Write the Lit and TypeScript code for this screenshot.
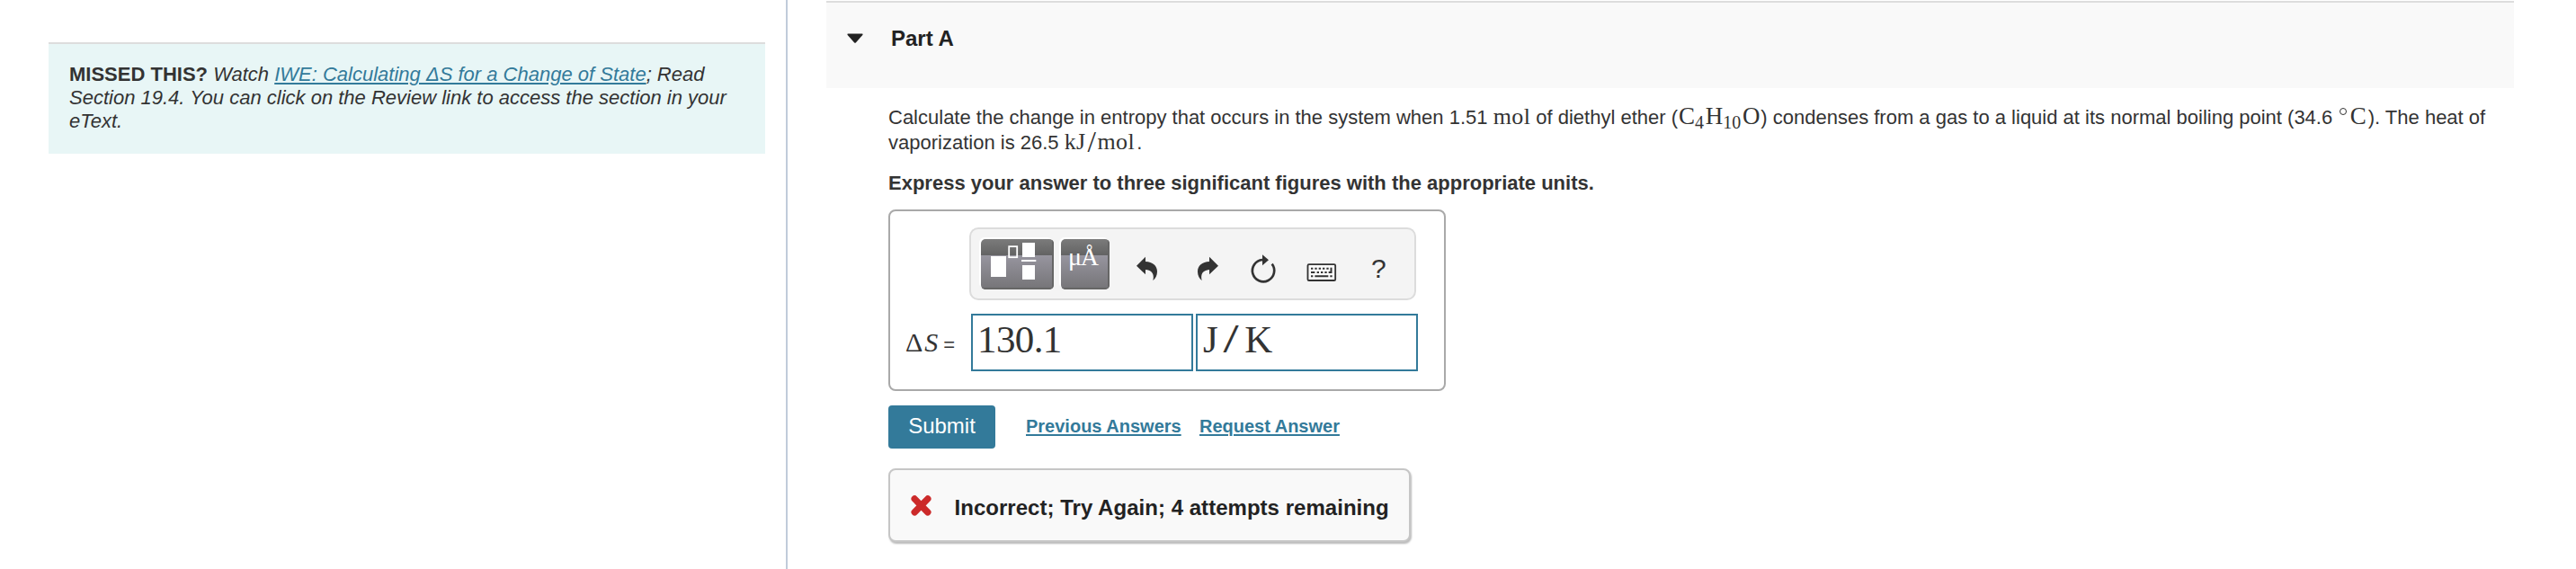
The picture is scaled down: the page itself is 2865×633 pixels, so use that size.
import { LitElement, html, css } from "lit";
import { customElement } from "lit/decorators.js";

@customElement("app-root")
export class AppRoot extends LitElement {
  static styles = css`
    :host { display: block; width: 2865px; height: 633px; overflow: hidden; background: #fff; color: #333;
      font: 22px/28px "Liberation Sans", Arial, sans-serif; }
    * { box-sizing: border-box; }
    a { color: #337a9a; text-decoration: underline; text-decoration-thickness: 2px; }
    svg { display: block; flex: none; }
    .page { display: flex; height: 633px; }
    .left { width: 874px; padding: 47px 23px 0 54px; flex: none; }
    .hint { height: 124px; background: #e8f6f6; border-top: 2px solid #ddd; padding: 21px 23px 0; line-height: 26px; font-style: italic; white-space: nowrap; }
    .hint b { font-style: normal; }
    .hint a { text-underline-offset: 2px; }
    .right { width: 1991px; border-left: 2px solid #c0cbda; padding: 1px 69px 0 43px; }
    .head { height: 97px; border-top: 2px solid #ddd; background: #f9f9f9; display: flex; padding: 26px 0 0 23px; font: bold 24px/27px "Liberation Sans", Arial, sans-serif; color: #222; }
    .caret { width: 49px; height: 27px; }
    .body { padding: 18.5px 0 0 69px; }
    .q { height: 56px; white-space: nowrap; }
    .m { font-family: "Liberation Serif", serif; font-size: 26px; line-height: 20px; display: inline-block; letter-spacing: 0.4px; }
    .mol { width: 41.5px; }
    .formula { width: 92.3px; font-size: 27px; padding-left: 1px; letter-spacing: 0; }
    .formula sub { font-size: 20px; line-height: 0; vertical-align: -5px; margin-right: 1.7px; }
    .deg { width: 33.4px; font-size: 27px; }
    .ring { display: inline-block; width: 8px; height: 8px; border: 1px solid #333; border-radius: 50%; margin: 0 4px 0 1.5px; vertical-align: 10px; }
    .rate { width: 80.5px; }
    .slash { font-size: 34px; line-height: 0; margin: 0 1px 0 2px; vertical-align: -3px; }
    .ask { display: block; margin-top: 17px; height: 28px; }
    .box { width: 620px; height: 202px; border: 2px solid #a9a9a9; border-radius: 8px; margin-top: 15.5px; padding-top: 18px; }
    .tools { margin-left: 88px; width: 497px; height: 81px; border: 2px solid #dcdcdc; border-radius: 10px; background: #f4f4f4; display: flex; padding: 8px 0 0 8px; }
    .icon { height: 40px; margin-top: 17px; }
    .units { margin-left: 3px; }
    .undo { margin-left: 24px; }
    .entry { display: flex; margin-top: 15px; }
    .label { width: 90px; padding: 16.5px 0 0 17px; white-space: nowrap; line-height: 30px; }
    .label i, .label span { font-family: "Liberation Serif", serif; font-size: 30px; }
    .label i { margin: 0 6px 0 2px; }
    .field { width: 247px; height: 64px; border: 2px solid #337a9a; margin-right: 3px; padding: 3px 0 0 5px; font: 43px/48px "Liberation Serif", serif; letter-spacing: -0.6px; white-space: pre; }
    .unit { padding-left: 6px; letter-spacing: 0; }
    .per { font-family: "Liberation Sans", sans-serif; font-style: italic; font-size: 41px; margin: 0 10px 0 8px; }
    .actions { display: flex; margin-top: 16px; }
    .submit { width: 119px; height: 48px; border: 0; border-radius: 4px; background: #337a9a; color: #fff; font: 24px/27px "Liberation Sans", Arial, sans-serif; padding: 9px 0 12px; margin-right: 34px; }
    .actions a { font-weight: bold; font-size: 20px; line-height: 22px; margin: 12px 20.3px 0 0; text-underline-offset: 2px; white-space: nowrap; }
    .alert { width: 581px; height: 82px; border: 2px solid #c6c6c6; border-radius: 8px; background: #f9f9f9; box-shadow: 1px 2px 2px #bbb; margin-top: 22px; display: flex; color: #222; font: bold 24px/27px "Liberation Sans", Arial, sans-serif; letter-spacing: 0.03px; padding: 28px 0 0 22px; white-space: nowrap; }
    .x { margin-right: 24.5px; }
  `;
  render() {
    const arrow = "M12 77 L42 47 V63 C66 64 81 76 81 97 C81 110 75 120 67 126 C72 105 64 92 42 90 V106 Z";
    return html`<div class="page">
      <div class="left"><div class="hint"><b>MISSED THIS?</b> Watch <a>IWE: Calculating ΔS for a Change of State</a>; Read<br>Section 19.4. You can click on the Review link to access the section in your<br>eText.</div></div>
      <div class="right">
        <div class="head"><svg class="caret" viewBox="0 0 49 27"><path d="M.8 8.5H17.2Q18 9 17.3 10L10 18.3Q9 19.3 8 18.3L.7 10Q0 9 .8 8.5Z" fill="#222"/></svg><span>Part A</span></div>
        <div class="body">
          <div class="q">Calculate the change in entropy that occurs in the system when 1.51 <span class="m mol">mol</span> of diethyl ether (<span class="m formula">C<sub>4</sub>H<sub>10</sub>O</span>) condenses from a gas to a liquid at its normal boiling point (34.6 <span class="m deg"><span class="ring"></span>C</span>). The heat of<br>vaporization is 26.5 <span class="m rate">kJ<span class="slash">/</span>mol</span>.</div>
          <b class="ask">Express your answer to three significant figures with the appropriate units.</b>
          <div class="box">
            <div class="tools">
              <svg width="86" height="62" viewBox="-3 -3 86 62">
                <defs>
                  <linearGradient id="hi" x2="0" y2="1"><stop stop-color="#7b7b7b"/><stop offset="1" stop-color="#636363"/></linearGradient>
                  <linearGradient id="lo" x2="0" y2="1"><stop stop-color="#97959f"/><stop offset="1" stop-color="#757477"/></linearGradient>
                  <clipPath id="c1"><rect width="81" height="56" rx="5"/></clipPath>
                </defs>
                <rect x="-2" y="-2" width="82" height="57" rx="6" fill="#fff"/>
                <g clip-path="url(#c1)"><rect width="81" height="18" fill="url(#hi)"/><rect y="18" width="81" height="38" fill="url(#lo)"/><path d="M80 0V55H0" fill="none" stroke="#666" stroke-width="2"/></g>
                <g fill="#fff"><rect x="11" y="19" width="17" height="23"/><rect x="46" y="4" width="14" height="16"/><rect x="45" y="23" width="16.3" height="2"/><rect x="46" y="29" width="14" height="16"/></g>
                <rect x="31.2" y="8.2" width="9" height="12" fill="none" stroke="#fff" stroke-width="1.8"/>
              </svg>
              <svg class="units" width="59" height="62" viewBox="-3 -3 59 62">
                <defs>
                  <linearGradient id="hi2" x2="0" y2="1"><stop stop-color="#7b7b7b"/><stop offset="1" stop-color="#636363"/></linearGradient>
                  <linearGradient id="lo2" x2="0" y2="1"><stop stop-color="#97959f"/><stop offset="1" stop-color="#757477"/></linearGradient>
                  <clipPath id="c2"><rect width="54" height="56" rx="5"/></clipPath>
                </defs>
                <rect x="-2" y="-2" width="55" height="57" rx="6" fill="#fff"/>
                <g clip-path="url(#c2)"><rect width="54" height="18" fill="url(#hi2)"/><rect y="18" width="54" height="38" fill="url(#lo2)"/><path d="M53 0V55H0" fill="none" stroke="#666" stroke-width="2"/></g>
                <text x="8" y="29" font-family="Liberation Serif" font-size="28" textLength="34" fill="#fff">μÅ</text>
              </svg>
              <svg class="icon undo" width="50" viewBox="0 30 150 120"><path d=${arrow} fill="#333"/></svg>
              <svg class="icon" width="63.33" viewBox="150 30 190 120"><path transform="translate(297 0) scale(-1 1)" d=${arrow} fill="#333"/></svg>
              <svg class="icon" width="63.33" viewBox="340 30 190 120"><path d="M465 71A36.5 36.5 0 1 1 433 57" fill="none" stroke="#333" stroke-width="8"/><path d="M433 40L454 58L433 76Z" fill="#333"/></svg>
              <svg class="icon" width="70" viewBox="530 30 210 120"><rect x="582.5" y="72.5" width="92" height="53.5" rx="4" fill="#fbfbfb" stroke="#333" stroke-width="5.5"/><path d="M593 86h7m6 0h7m6 0h7m6 0h7m6 0h7M593 99h13m7 0h7m6 0h7m6 0h7m6 0h10M593 112h7m6 0h45m6 0h7" fill="none" stroke="#333" stroke-width="6"/><path d="M660.5 83V102" stroke="#333" stroke-width="6"/></svg>
              <svg class="icon" width="50" viewBox="740 30 150 120"><text x="794" y="118" font-family="Liberation Sans" font-size="90" fill="#333">?</text></svg>
            </div>
            <div class="entry">
              <div class="label"><span>Δ</span><i>S</i>=</div>
              <div class="field">130.1</div>
              <div class="field unit">J<span class="per">/</span>K</div>
            </div>
          </div>
          <div class="actions"><button class="submit">Submit</button><a>Previous Answers</a><a>Request Answer</a></div>
          <div class="alert"><svg class="x" width="25" height="25" viewBox="0 0 25 25"><path d="M5.2 4L19.8 18.8M19.8 4L5.2 18.8" stroke="#cc2a2a" stroke-width="7.4" stroke-linecap="round"/></svg><span>Incorrect; Try Again; 4 attempts remaining</span></div>
        </div>
      </div>
    </div>`;
  }
}
